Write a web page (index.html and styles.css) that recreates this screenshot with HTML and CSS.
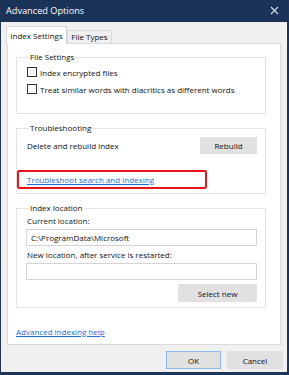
FILE: index.html
```html
<!DOCTYPE html>
<html>
<head>
<meta charset="utf-8">
<link rel="stylesheet" href="styles.css">
</head>
<body>
<div class="window">
  <div class="titlebar">
    <span class="title">Advanced Options</span>
    <svg class="close" width="9" height="9" viewBox="0 0 9 9"><path d="M1 1L8 8M8 1L1 8" stroke="#d8dde6" stroke-width="1.1"/></svg>
  </div>
  <div class="tabs">
    <div class="tab active">Index Settings</div>
    <div class="tab">File Types</div>
  </div>
  <div class="panel">
    <fieldset class="group g1">
      <legend>File Settings</legend>
      <label class="check"><span class="box"></span>Index encrypted files</label>
      <label class="check"><span class="box"></span>Treat similar words with diacritics as different words</label>
    </fieldset>
    <fieldset class="group g2">
      <legend>Troubleshooting</legend>
      <div class="row">
        <span>Delete and rebuild index</span>
        <button class="btn rebuild">Rebuild</button>
      </div>
      <div class="highlight"><a href="#" class="link">Troubleshoot search and indexing</a></div>
    </fieldset>
    <fieldset class="group g3">
      <legend>Index location</legend>
      <div class="label">Current location:</div>
      <div class="input">C:\ProgramData\Microsoft</div>
      <div class="label">New location, after service is restarted:</div>
      <div class="input"></div>
      <div class="right"><button class="btn selnew">Select new</button></div>
    </fieldset>
    <a href="#" class="link help">Advanced indexing help</a>
  </div>
  <div class="footer">
    <button class="btn ok">OK</button>
    <button class="btn cancel">Cancel</button>
  </div>
</div>
</body>
</html>
```
FILE: styles.css
```css
html, body {
  margin: 0;
  padding: 0;
}
body {
  font-family: "Open Sans", "Noto Sans", sans-serif;
  font-size: 8px;
  color: #111;
}
.window {
  box-sizing: border-box;
  width: 289px;
  height: 375px;
  display: flex;
  flex-direction: column;
  background: #f0f0f0;
  border-left: 1px solid #1f3557;
  border-right: 2px solid #1f3557;
  border-bottom: 3px solid #1f3557;
}
.titlebar {
  height: 22px;
  flex: none;
  background: #1b3358;
  color: #fff;
  display: flex;
  align-items: center;
  justify-content: space-between;
  padding: 0 8px 0 5px;
  font-size: 9.2px;
}
.title { margin-top: -2px; }
.close { margin-top: -1px; }
.tabs {
  display: flex;
  align-items: flex-end;
  margin-top: 4px;
  padding-left: 5px;
  height: 17px;
  flex: none;
}
.tab {
  box-sizing: border-box;
  height: 13px;
  width: 45px;
  justify-content: center;
  border: 1px solid #d9d9d9;
  border-bottom: none;
  background: #f0f0f0;
  display: flex;
  align-items: center;
  line-height: 1;
  font-size: 8px;
  white-space: nowrap;
}
.tab.active {
  height: 18px;
  width: 61px;
  background: #fff;
  margin-bottom: -1px;
  position: relative;
  z-index: 1;
}
.panel {
  box-sizing: border-box;
  margin: 0 6px 0 6px;
  height: 302px;
  background: #fff;
  border: 1px solid #d9d9d9;
  padding: 7px 14px 0 8px;
  display: flex;
  flex-direction: column;
}
.group {
  border: 1px solid #e3e3e3;
  margin: 0;
  padding: 0 0 0 10px;
  min-width: 0;
  box-sizing: border-box;
}
.group legend {
  padding: 0 1px;
  margin-left: 2px;
  line-height: 12px;
}
.g1 { height: 63px; }
.g2 { height: 72px; margin-top: 8px; }
.g3 { height: 106px; margin-top: 8px; }
.check {
  display: flex;
  align-items: center;
  height: 12px;
  margin-top: 3px;
}
.check + .check { margin-top: 5px; }
.box {
  width: 8px;
  height: 8px;
  border: 1px solid #333;
  background: #fff;
  margin-right: 3px;
}
.row {
  display: flex;
  align-items: center;
  justify-content: space-between;
  padding-right: 8px;
  margin-top: 3px;
}
.btn {
  font: inherit;
  color: #111;
  background: #e1e1e1;
  border: 1px solid #e1e1e1;
  padding: 0;
  margin: 0;
  height: 17px;
}
.rebuild { width: 57px; }
.highlight {
  margin: 16px 0 0 -10px;
  width: 190px;
  height: 19px;
  box-sizing: border-box;
  border: 2px solid #e8141c;
  border-radius: 2px;
  display: flex;
  align-items: center;
  padding-left: 8px;
}
.link {
  color: #1a6fd6;
  text-decoration: underline;
}
.label {
  margin-top: 1px;
  line-height: 12px;
}
.input {
  box-sizing: border-box;
  height: 17px;
  margin: 2px 8px 0 -1px;
  border: 1px solid #d4d4d4;
  background: #fff;
  padding-left: 4px;
  line-height: 15px;
}
.input + .label { margin-top: 3px; }
.right {
  display: flex;
  justify-content: flex-end;
  padding-right: 8px;
  margin-top: 4px;
}
.selnew { width: 79px; height: 18px; }
.help {
  margin-top: 18px;
  align-self: flex-start;
}
.footer {
  display: flex;
  justify-content: flex-end;
  gap: 6px;
  padding: 6px 4px 0 0;
}
.ok, .cancel { width: 55px; height: 18px; }
.ok { border-color: #8ab8e8; }
.cancel { width: 56px; }
```
